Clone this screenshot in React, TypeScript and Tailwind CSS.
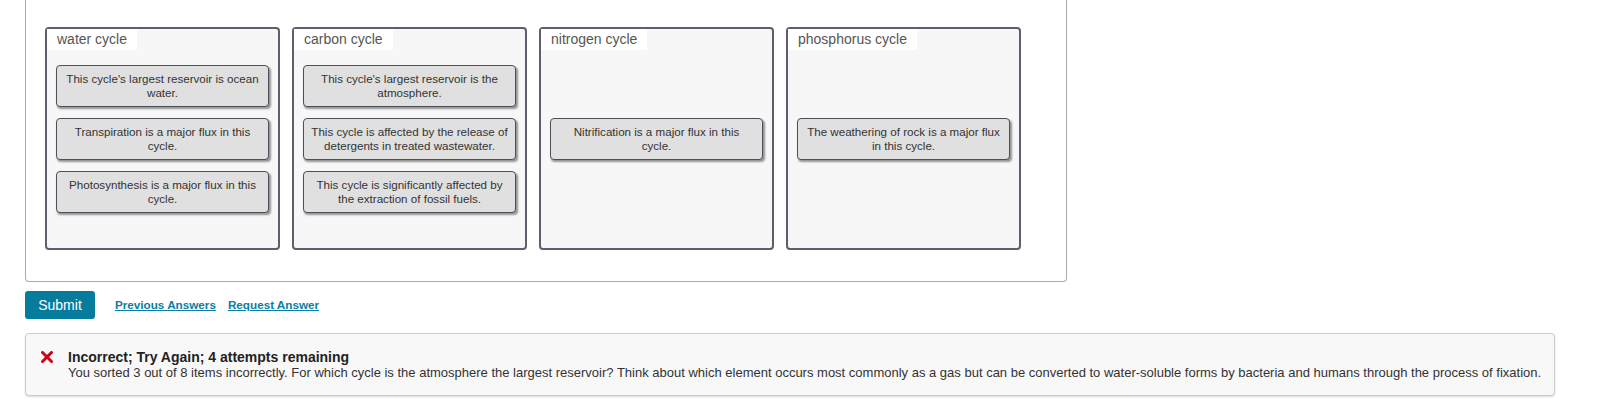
import React from "react";

type Bin = { label: string; cards: string[][] };

const bins: Bin[] = [
  {
    label: "water cycle",
    cards: [
      ["This cycle's largest reservoir is ocean", "water."],
      ["Transpiration is a major flux in this", "cycle."],
      ["Photosynthesis is a major flux in this", "cycle."],
    ],
  },
  {
    label: "carbon cycle",
    cards: [
      ["This cycle's largest reservoir is the", "atmosphere."],
      ["This cycle is affected by the release of", "detergents in treated wastewater."],
      ["This cycle is significantly affected by", "the extraction of fossil fuels."],
    ],
  },
  {
    label: "nitrogen cycle",
    cards: [["Nitrification is a major flux in this", "cycle."]],
  },
  {
    label: "phosphorus cycle",
    cards: [["The weathering of rock is a major flux", "in this cycle."]],
  },
];

function Card({ lines }: { lines: string[] }) {
  return (
    <div className="w-[213px] h-[42px] shrink-0 border-[1.5px] border-[#4e4e5a] rounded-[4px] bg-[#e0e0e0] shadow-[1.5px_2px_2px_rgba(0,0,0,0.4)] flex flex-col items-center justify-center text-center text-[11.6px] leading-[14px] text-[#333] whitespace-nowrap">
      {lines.map((l, i) => (
        <span key={i}>{l}</span>
      ))}
    </div>
  );
}

function XIcon() {
  return (
    <svg width="12" height="12" viewBox="0 0 12 12" className="mt-[2px] shrink-0">
      <path d="M1.5 1.5 L10.5 10.5 M10.5 1.5 L1.5 10.5" stroke="#d3001b" strokeWidth="3" strokeLinecap="square" />
    </svg>
  );
}

export default function App() {
  return (
    <div className="w-[1606px] h-[419px] bg-white pl-[25px] overflow-hidden font-['Liberation_Sans',Arial,sans-serif]">
      <div className="w-[1042px] h-[282px] border-x border-b border-[#aaaaaa] rounded-b-[4px] pl-[19px] pt-[27px]">
        <div className="flex gap-[12px]">
          {bins.map((b) => (
            <div
              key={b.label}
              className="relative w-[235px] h-[223px] border-2 border-[#5e5e6c] rounded-[4px] bg-[#f7f7f7] flex flex-col items-center justify-center gap-[11px]"
            >
              <div className="absolute left-0 top-0 h-[21px] bg-white pl-[10px] pr-[10px] text-[14px] leading-[21px] text-[#555]">
                {b.label}
              </div>
              {b.cards.map((c, i) => (
                <Card key={i} lines={c} />
              ))}
            </div>
          ))}
        </div>
      </div>

      <div className="mt-[9px] flex items-center">
        <button className="w-[70px] h-[28px] bg-[#067c9d] rounded-[3px] text-white text-[14px] leading-[28px]">
          Submit
        </button>
        <a className="ml-[20px] text-[11.7px] font-bold underline text-[#0a7ea4] cursor-pointer">Previous Answers</a>
        <a className="ml-[12px] text-[11.7px] font-bold underline text-[#0a7ea4] cursor-pointer">Request Answer</a>
      </div>

      <div className="mt-[14px] w-[1530px] h-[63px] border border-[#cccccc] rounded-[4px] bg-[#f8f8f8] shadow-[0_1px_2px_rgba(0,0,0,0.15)] flex items-start pt-[15px] pl-[15px]">
        <XIcon />
        <div className="ml-[15px]">
          <div className="text-[14px] leading-[16px] font-bold text-[#222]">
            Incorrect; Try Again; 4 attempts remaining
          </div>
          <div className="text-[13px] leading-[16px] text-[#333] whitespace-nowrap">
            You sorted 3 out of 8 items incorrectly. For which cycle is the atmosphere the largest reservoir? Think about which element occurs most commonly as a gas but can be converted to water-soluble forms by bacteria and humans through the process of fixation.
          </div>
        </div>
      </div>
    </div>
  );
}
